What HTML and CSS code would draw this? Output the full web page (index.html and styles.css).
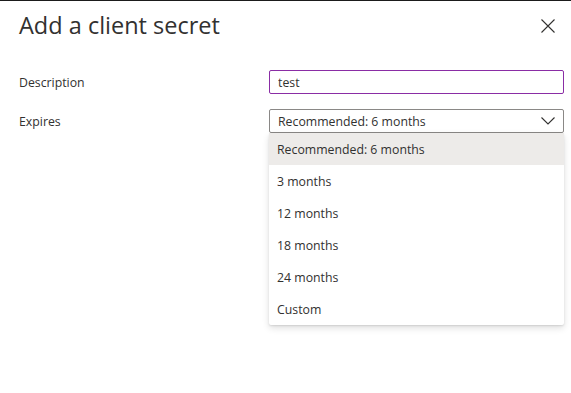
FILE: index.html
```html
<!DOCTYPE html>
<html lang="en">
<head>
    <meta charset="UTF-8">
    <meta name="viewport" content="width=device-width, initial-scale=1.0">
    <title>Add a client secret</title>
    <link rel="stylesheet" href="styles.css">
</head>
<body>
    <div class="panel">
        <header class="panel-header">
            <h2 class="title">Add a client secret</h2>
            <button class="close-btn" aria-label="Close">
                <svg width="14" height="14" viewBox="0 0 14 14">
                    <path d="M0.5 0.5 L13.5 13.5 M13.5 0.5 L0.5 13.5" stroke="#323130" stroke-width="1.1" fill="none"/>
                </svg>
            </button>
        </header>

        <main class="form">
            <div class="form-row">
                <label for="description" class="label-text">Description</label>
                <input id="description" class="text-input" type="text" value="test">
            </div>
            <div class="form-row">
                <span class="label-text">Expires</span>
                <div class="dropdown">
                    <div class="dropdown-title">
                        <span>Recommended: 6 months</span>
                        <svg class="chevron" width="14" height="8" viewBox="0 0 14 8">
                            <path d="M0.5 0.5 L7 7 L13.5 0.5" stroke="#323130" stroke-width="1.1" fill="none"/>
                        </svg>
                    </div>
                    <ul class="dropdown-list">
                        <li class="option selected">Recommended: 6 months</li>
                        <li class="option">3 months</li>
                        <li class="option">12 months</li>
                        <li class="option">18 months</li>
                        <li class="option">24 months</li>
                        <li class="option">Custom</li>
                    </ul>
                </div>
            </div>
        </main>
    </div>
</body>
</html>
```

FILE: styles.css
```css
:root {
    --text-primary: #323130;
    --border-color: #8a8886;
    --focus-color: #8a2da5;
    --hover-bg: #edebe9;
}

* {
    margin: 0;
    padding: 0;
    box-sizing: border-box;
}

body {
    font-family: 'Open Sans', 'Noto Sans', sans-serif;
    font-size: 12.3px;
    color: var(--text-primary);
    background: #ffffff;
    border-top: 1px solid #1b1b1b;
    min-height: 100vh;
}

.panel {
    padding: 0 7px 0 19px;
}

.panel-header {
    display: flex;
    justify-content: space-between;
    align-items: center;
    height: 50px;
}

.title {
    font-size: 23.5px;
    font-weight: 400;
    line-height: 30px;
    margin-top: -2px;
}

.close-btn {
    background: none;
    border: none;
    width: 14px;
    height: 14px;
    margin-right: 9px;
    cursor: pointer;
    display: flex;
}

.form {
    display: flex;
    flex-direction: column;
    gap: 15px;
    padding-top: 19px;
}

.form-row {
    display: grid;
    grid-template-columns: 250px 295px;
    align-items: center;
}

.label-text {
    line-height: 22px;
    padding-top: 2px;
}

.text-input {
    height: 24px;
    border: 1.5px solid var(--focus-color);
    border-radius: 2px;
    padding: 1px 8px 0;
    font-family: inherit;
    font-size: 12.3px;
    color: var(--text-primary);
    outline: none;
}

.dropdown {
    position: relative;
}

.dropdown-title {
    height: 24px;
    border: 1px solid var(--border-color);
    border-radius: 2px;
    padding: 0 8px;
    display: flex;
    justify-content: space-between;
    align-items: center;
    line-height: 24px;
}

.dropdown-title span {
    padding-top: 1px;
}

.dropdown-list {
    position: absolute;
    top: 24px;
    left: 0;
    right: 0;
    list-style: none;
    background: #ffffff;
    border-radius: 2px;
    box-shadow: 0 3px 7px rgba(0, 0, 0, 0.13), 0 1px 2px rgba(0, 0, 0, 0.1);
}

.option {
    height: 32px;
    line-height: 34px;
    padding: 0 8px;
    overflow: hidden;
}

.option.selected {
    background: var(--hover-bg);
}
```
